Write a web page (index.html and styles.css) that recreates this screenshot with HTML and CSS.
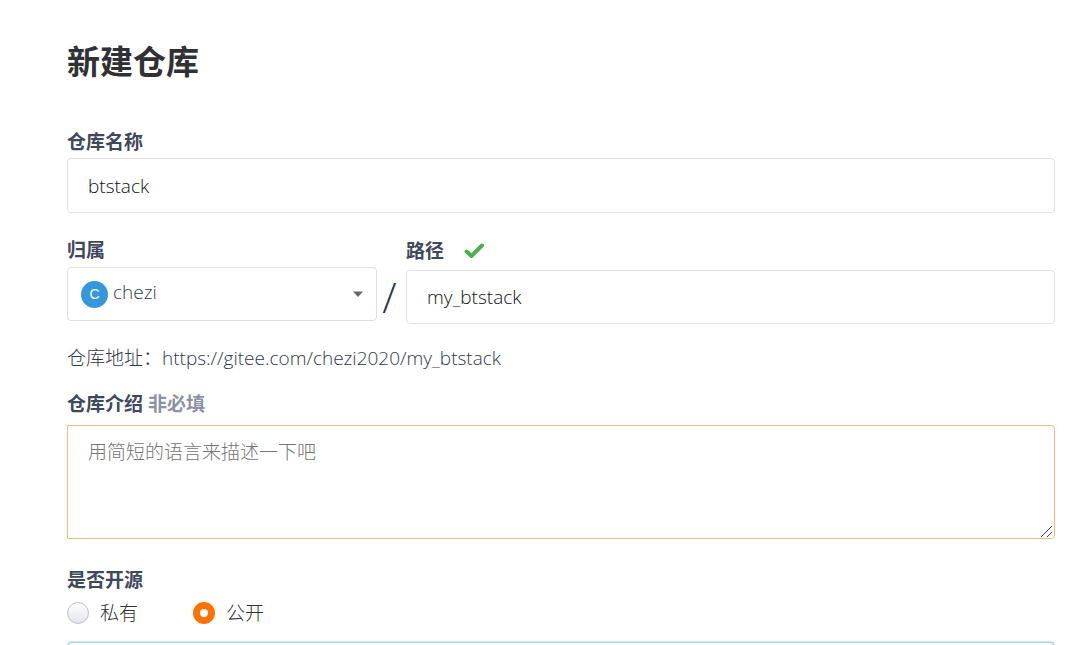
FILE: index.html
```html
<!DOCTYPE html>
<html lang="zh-CN">
<head>
<meta charset="utf-8">
<meta name="viewport" content="width=device-width, initial-scale=1">
<title>新建仓库</title>
<link rel="stylesheet" href="styles.css">
</head>
<body>
<main class="page">
  <h1 class="title">新建仓库</h1>
  <form class="form">
    <div class="field">
      <label class="label" for="name">仓库名称</label>
      <input class="input" id="name" type="text" value="btstack">
    </div>
    <div class="location">
      <div class="field owner">
        <label class="label" for="owner">归属</label>
        <div class="picker">
          <select class="input select" id="owner"><option>chezi</option></select>
          <span class="avatar" aria-hidden="true">C</span>
          <svg class="caret" viewBox="0 0 10 6" aria-hidden="true"><path d="M0 0.5h10L5 6z"/></svg>
        </div>
      </div>
      <span class="slash">/</span>
      <div class="field path">
        <div class="path-head">
          <label class="label" for="path">路径</label>
          <svg class="check" viewBox="0 0 20 16" aria-hidden="true"><path d="M2.5 8.5l5 4.5L18 2.5"/></svg>
        </div>
        <input class="input" id="path" type="text" value="my_btstack">
      </div>
    </div>
    <p class="address">仓库地址：https://gitee.com/chezi2020/my_btstack</p>
    <div class="field">
      <label class="label" for="intro">仓库介绍 <span class="optional">非必填</span></label>
      <div class="intro-box">
        <textarea class="input intro" id="intro" placeholder="用简短的语言来描述一下吧"></textarea>
        <svg class="grip" viewBox="0 0 13 13" aria-hidden="true"><path d="M1 12L12 1M7 12l5-5"/></svg>
      </div>
    </div>
    <fieldset class="visibility">
      <legend class="label">是否开源</legend>
      <div class="choices">
        <label class="choice"><input class="radio" type="radio" name="visibility">私有</label>
        <label class="choice"><input class="radio" type="radio" name="visibility" checked>公开</label>
      </div>
    </fieldset>
  </form>
  <div class="notice"></div>
</main>
</body>
</html>
```
FILE: styles.css
```css
* {
  box-sizing: border-box;
}

body {
  margin: 0;
  background: #fff;
  color: #40485b;
  font: 300 19px/24px "Open Sans", "Noto Sans CJK SC", sans-serif;
}

.page {
  display: flex;
  flex-direction: column;
  min-height: 100vh;
  padding: 40px 33px 0 67px;
}

.title {
  margin: 0 0 46px;
  color: #303133;
  font-size: 33px;
  line-height: 44px;
  font-weight: 700;
}

.field {
  display: flex;
  flex-direction: column;
  gap: 4px;
}

.label {
  padding: 0;
  font-weight: 700;
}

.input {
  width: 100%;
  height: 55px;
  margin: 0;
  padding: 0 20px;
  border: 1px solid #dfe1e9;
  border-radius: 4px;
  outline: 0;
  background: #fff;
  color: #111;
  font: inherit;
}

.location {
  display: flex;
  margin-top: 25px;
}

.location .input {
  height: 54px;
}

.owner {
  flex: 0 0 310px;
  gap: 5px;
}

.picker {
  display: grid;
  align-items: center;
}

.picker > * {
  grid-area: 1 / 1;
}

.select {
  appearance: none;
  padding: 0 45px 4px;
  border-color: #dcdfe6;
}

.location .select {
  color: #343c50;
}

.avatar {
  width: 27px;
  height: 27px;
  margin-left: 14px;
  border-radius: 50%;
  background: #3498db;
  color: #fff;
  font: 14px/27px "Liberation Sans", sans-serif;
  text-align: center;
  pointer-events: none;
}

.caret {
  justify-self: end;
  width: 10px;
  height: 6px;
  margin-right: 14px;
  fill: #606978;
  pointer-events: none;
}

.slash {
  flex: 0 0 29px;
  padding: 41px 4px 0 0;
  color: #30384b;
  font-size: 42px;
  line-height: 36px;
  text-align: center;
}

.path {
  flex: 1;
  gap: 6px;
}

.path-head {
  display: flex;
  align-items: center;
  gap: 20px;
  height: 26px;
}

.check {
  width: 20px;
  height: 16px;
  fill: none;
  stroke: #4caf50;
  stroke-width: 4;
  stroke-linecap: round;
  stroke-linejoin: round;
}

.address {
  margin: 22px 0;
  color: #30384b;
}

.optional {
  color: #8c92a4;
}

.intro-box {
  display: grid;
  margin-top: 5px;
}

.intro-box > * {
  grid-area: 1 / 1;
}

.intro {
  height: 114px;
  padding: 14px 20px;
  border-color: #ffb577;
  border-radius: 0 4px 4px 0;
}

.intro::placeholder {
  color: #757575;
}

.grip {
  place-self: end;
  width: 13px;
  height: 13px;
  margin: 0 2px 1px 0;
  background: #fff;
  fill: none;
  stroke: #444;
  pointer-events: none;
}

.visibility {
  margin: 29px 0 17px;
  padding: 0;
  border: 0;
}

.choices {
  display: flex;
  gap: 55px;
  margin-top: 9px;
}

.choice {
  display: flex;
  align-items: center;
  gap: 11px;
  color: #303133;
}

.radio {
  appearance: none;
  width: 22px;
  height: 22px;
  margin: 0;
  border: 1px solid #bfc1c9;
  border-radius: 50%;
  background: linear-gradient(#fff, #e4e5ea);
}

.radio:checked {
  border: 7px solid #fe7300;
  background: #fff;
}

.notice {
  flex: 1;
  margin: 0 1px;
  border: 1px solid #a9d5de;
  border-bottom: 0;
  border-radius: 4px 4px 0 0;
  background: #f8ffff;
  box-shadow: 0 0 0 1px #d4eaef;
}
```
